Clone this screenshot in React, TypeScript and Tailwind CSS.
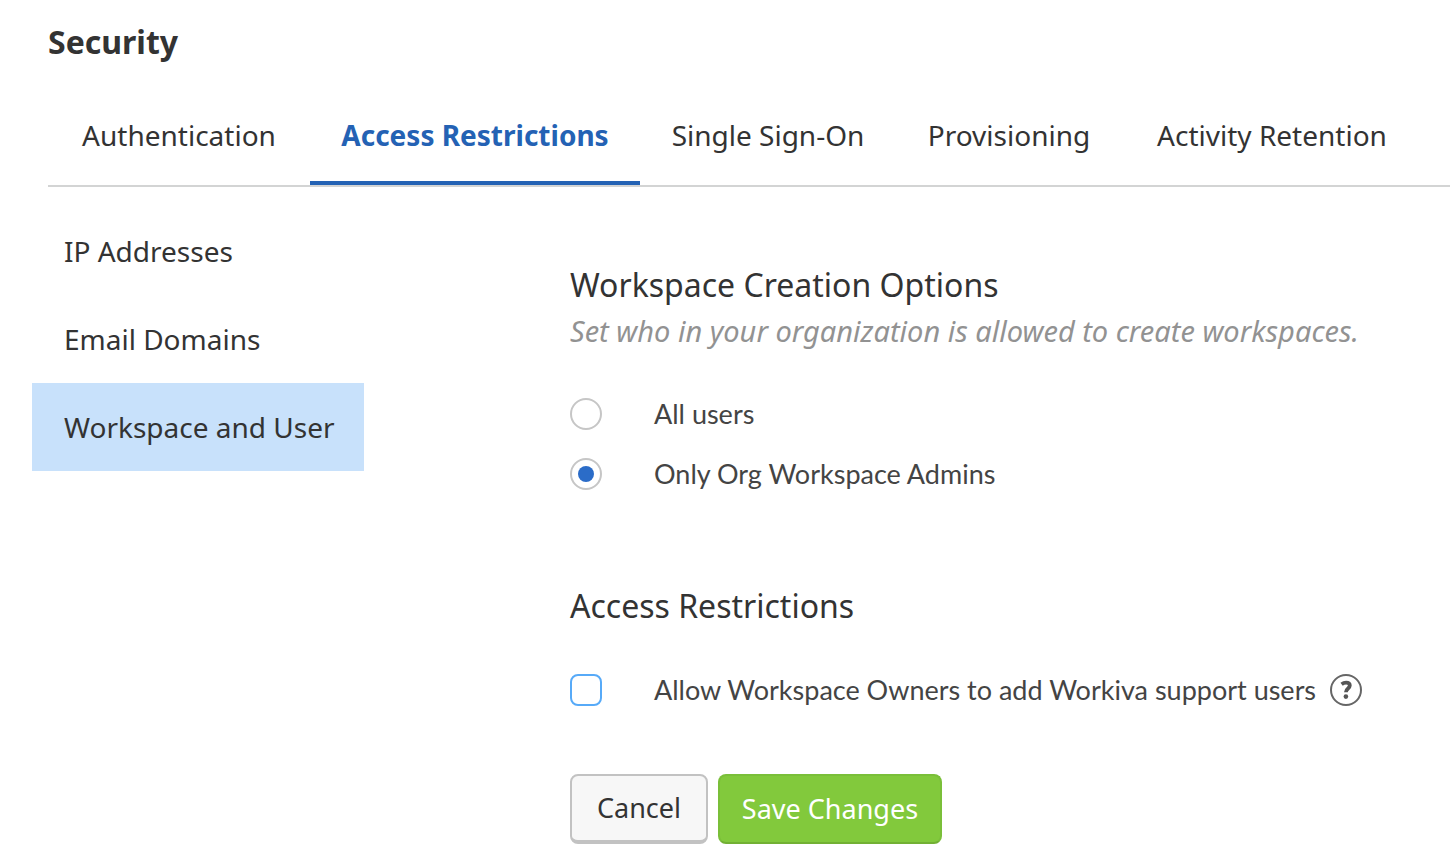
import React, { useState } from "react";
import clsx from "clsx";

const TABS = [
  "Authentication",
  "Access Restrictions",
  "Single Sign-On",
  "Provisioning",
  "Activity Retention",
];

const SECTIONS = ["IP Addresses", "Email Domains", "Workspace and User"];

const CREATION_OPTIONS = [
  { id: "all-users", label: "All users" },
  { id: "org-admins", label: "Only Org Workspace Admins" },
];

function HelpIcon() {
  return (
    <svg viewBox="0 0 32 32" className="h-8 w-8" fill="none" aria-hidden="true">
      <circle cx="16" cy="16" r="15" stroke="#666" strokeWidth="2" />
      <path
        d="M11.6 10.2c1.3-1 2.7-1.6 4.5-1.6 2.4 0 3.7 1.2 3.7 3 0 3-3.9 2.8-3.9 6.6"
        stroke="#555"
        strokeWidth="3.8"
      />
      <circle cx="15.9" cy="22.6" r="2.3" fill="#555" />
    </svg>
  );
}

function App() {
  const [activeTab, setActiveTab] = useState("Access Restrictions");
  const [section, setSection] = useState("Workspace and User");
  const [creation, setCreation] = useState("org-admins");
  const [allowSupport, setAllowSupport] = useState(false);

  return (
    <div className="min-h-screen overflow-x-hidden bg-white pt-5 font-['Noto_Sans',sans-serif] text-[28px] leading-10 text-[#333]">
      <h1 className="pl-12 text-[32px] leading-11 font-bold">Security</h1>

      <nav className="mt-6 ml-12 grid grid-cols-[262px_330px_256px_226px_300px] border-b-2 border-[#d3d4d4]">
        {TABS.map((tab) => (
          <button
            key={tab}
            type="button"
            onClick={() => setActiveTab(tab)}
            className={clsx(
              "border-b-4 pt-[27px] pb-[26px] text-center whitespace-nowrap",
              activeTab === tab
                ? "border-[#2462b4] font-bold text-[#2462b4]"
                : "border-transparent"
            )}
          >
            {tab}
          </button>
        ))}
      </nav>

      <div className="flex">
        <aside className="mt-5 ml-8 w-[332px] shrink-0">
          {SECTIONS.map((name) => (
            <button
              key={name}
              type="button"
              onClick={() => setSection(name)}
              className={clsx(
                "block w-full px-8 py-6 text-left whitespace-nowrap",
                section === name && "bg-[#c8e1fb]"
              )}
            >
              {name}
            </button>
          ))}
        </aside>

        <main className="ml-[206px] min-w-0 flex-1 pt-[76px]">
          <h2 className="text-[32px] leading-11">Workspace Creation Options</h2>
          <p className="pt-1 text-[29px] leading-10 whitespace-nowrap text-[#929292] italic">
            Set who in your organization is allowed to create workspaces.
          </p>

          <div className="mt-[43px] space-y-5 font-[Lato,sans-serif] text-[27px] leading-10 text-[#444]">
            {CREATION_OPTIONS.map(({ id, label }) => (
              <label key={id} className="flex items-center gap-[52px]">
                <input
                  type="radio"
                  name="workspace-creation"
                  checked={creation === id}
                  onChange={() => setCreation(id)}
                  className="h-8 w-8 appearance-none rounded-full border-2 border-[#c6c6c6] bg-white bg-clip-content p-1.5 checked:bg-[#2b6cc8]"
                />
                {label}
              </label>
            ))}
          </div>

          <h2 className="mt-[90px] text-[32px] leading-11">
            Access Restrictions
          </h2>
          <div className="mt-[42px] flex items-center gap-3.5 font-[Lato,sans-serif] text-[27px] leading-10 text-[#444]">
            <label className="flex items-center gap-[52px] whitespace-nowrap">
              <input
                type="checkbox"
                checked={allowSupport}
                onChange={(e) => setAllowSupport(e.target.checked)}
                className="h-8 w-8 appearance-none rounded-lg border-2 border-[#57aaf8] bg-white checked:bg-[#57aaf8]"
              />
              Allow Workspace Owners to add Workiva support users
            </label>
            <button type="button" aria-label="Help">
              <HelpIcon />
            </button>
          </div>

          <div className="mt-16 flex gap-2.5 pb-5 text-[27px] leading-10">
            <button
              type="button"
              className="h-[70px] w-[138px] rounded-lg border-2 border-b-4 border-[#c2c2c2] bg-[#f7f7f7]"
            >
              Cancel
            </button>
            <button
              type="button"
              className="h-[70px] w-[224px] rounded-lg border-2 border-[#7abf39] border-b-[#72b034] bg-[#82c93c] text-white"
            >
              Save Changes
            </button>
          </div>
        </main>
      </div>
    </div>
  );
}

export default App;
